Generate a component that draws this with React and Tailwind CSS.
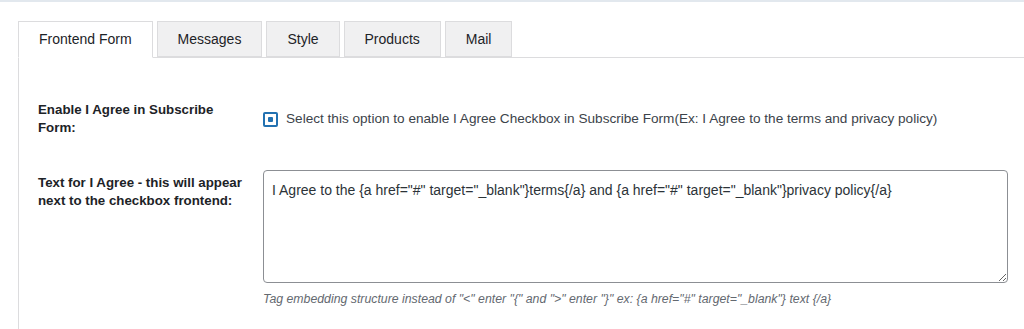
import React from 'react';

const tabs = ['Frontend Form', 'Messages', 'Style', 'Products', 'Mail'];

const agreeText =
  'I Agree to the {a href="#" target="_blank"}terms{/a} and {a href="#" target="_blank"}privacy policy{/a}';

export default function App() {
  return (
    <div className="h-[329px] bg-white overflow-hidden text-[14px] text-[#3c434a]" style={{ fontFamily: '"Liberation Sans", Arial, sans-serif' }}>
      <div className="h-[2px] bg-[#e2e8ee]" />
      <div className="pl-[18px] pt-[19px]">
        {/* tabs */}
        <div className="flex gap-[4px] border-b border-[#dcdcde] h-[37px]">
          {tabs.map((t, i) => (
            <div
              key={t}
              className={
                i === 0
                  ? 'h-[37px] px-[20px] flex items-center border border-[#dcdcde] border-b-white bg-white text-[#1d2327]'
                  : 'h-[36px] px-[20px] flex items-center border border-[#dcdcde] bg-[#f0f0f1] text-[#1d2327]'
              }
            >
              {t}
            </div>
          ))}
        </div>

        {/* panel */}
        <div className="border-l border-[#dcdcde] h-[280px]">
          <div className="flex items-start pt-[43px]">
            <div className="w-[244px] pl-[19px] pr-[10px] leading-[18px] text-[13.3px] font-bold text-[#1d2327]">
              Enable I Agree in Subscribe<br />Form:
            </div>
            <div className="flex-1 pt-[9px] flex items-center gap-[8px]">
              <span className="w-[15px] h-[15px] rounded-[2px] border-2 border-[#2271b1] bg-white flex items-center justify-center">
                <span className="w-[5px] h-[5px] rounded-[1px] bg-[#2271b1]" />
              </span>
              <span className="leading-[18px] text-[13.6px]">
                Select this option to enable I Agree Checkbox in Subscribe Form(Ex: I Agree to the terms and privacy policy)
              </span>
            </div>
          </div>

          <div className="flex items-start pt-[33px]">
            <div className="w-[244px] pl-[19px] pr-[10px] pt-[4px] leading-[18px] text-[13.3px] font-bold text-[#1d2327]">
              Text for I Agree - this will appear<br />next to the checkbox frontend:
            </div>
            <div className="flex-1 pr-[16px]">
              <textarea
                readOnly
                value={agreeText}
                className="block w-full h-[113px] rounded-[4px] border border-[#8c8f94] bg-white pl-[8px] pr-[8px] pt-[9px] leading-[20px] text-[14px] text-[#2c3338] resize-y outline-none"
              />
              <p className="mt-[8px] text-[12.3px] italic leading-[16px] text-[#646970]">
                Tag embedding structure instead of "&lt;" enter "{'{'}" and "&gt;" enter "{'}'}" ex: {'{a href="#" target="_blank"} text {/a}'}
              </p>
            </div>
          </div>
        </div>
      </div>
    </div>
  );
}
